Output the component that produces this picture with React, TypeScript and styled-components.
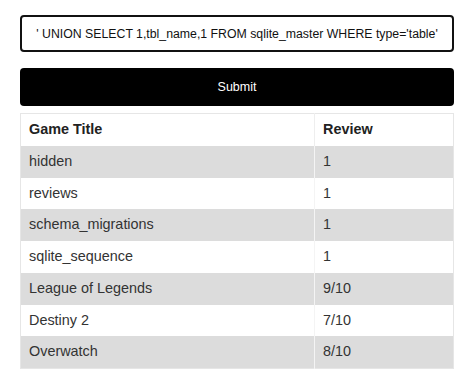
import React from "react";
import styled, { createGlobalStyle } from "styled-components";

const Global = createGlobalStyle`
  html, body { margin: 0; padding: 0; background: #fff; }
  body { font-family: "Liberation Sans", Arial, sans-serif; }
`;

const Page = styled.div`
  padding: 15px 20px 0 20px;
  display: flex;
  flex-direction: column;
`;

const QueryInput = styled.input`
  box-sizing: border-box;
  width: 100%;
  height: 37px;
  border: 2px solid #111;
  border-radius: 4px;
  font-family: "Liberation Sans", Arial, sans-serif;
  font-size: 12.3px;
  color: #111;
  text-align: center;
  padding: 0;
  outline: none;
  background: #fff;
`;

const SubmitButton = styled.button`
  box-sizing: border-box;
  margin-top: 16px;
  width: 100%;
  height: 38px;
  border: none;
  border-radius: 4px;
  background: #000;
  color: #fff;
  font-family: "Liberation Sans", Arial, sans-serif;
  font-size: 12.5px;
`;

const Table = styled.table`
  margin-top: 7px;
  width: 100%;
  table-layout: fixed;
  border-collapse: collapse;
  border: 1px solid #e6e6e6;
  font-size: 14.4px;
  color: #333;
`;

const TitleCol = styled.col`
  width: 294px;
`;

const Row = styled.tr<{ $shaded?: boolean }>`
  background: ${(p) => (p.$shaded ? "#dcdcdc" : "#fff")};
`;

const HeadCell = styled.th`
  text-align: left;
  font-weight: bold;
  color: #222;
  padding: 7px 8px;
  line-height: 17.75px;
  border-left: 1px solid #eeeeee;
  &:first-child { border-left: none; }
`;

const Cell = styled.td`
  padding: 7px 8px;
  line-height: 17.75px;
  border-left: 1px solid #f4f4f4;
  &:first-child { border-left: none; }
`;

const rows: [string, string][] = [
  ["hidden", "1"],
  ["reviews", "1"],
  ["schema_migrations", "1"],
  ["sqlite_sequence", "1"],
  ["League of Legends", "9/10"],
  ["Destiny 2", "7/10"],
  ["Overwatch", "8/10"],
];

export default function App() {
  return (
    <>
      <Global />
      <Page>
        <QueryInput
          defaultValue="' UNION SELECT 1,tbl_name,1 FROM sqlite_master WHERE type='table'"
        />
        <SubmitButton>Submit</SubmitButton>
        <Table>
          <colgroup>
            <TitleCol />
            <col />
          </colgroup>
          <thead>
            <Row>
              <HeadCell>Game Title</HeadCell>
              <HeadCell>Review</HeadCell>
            </Row>
          </thead>
          <tbody>
            {rows.map(([t, r], i) => (
              <Row key={t} $shaded={i % 2 === 0}>
                <Cell>{t}</Cell>
                <Cell>{r}</Cell>
              </Row>
            ))}
          </tbody>
        </Table>
      </Page>
    </>
  );
}
